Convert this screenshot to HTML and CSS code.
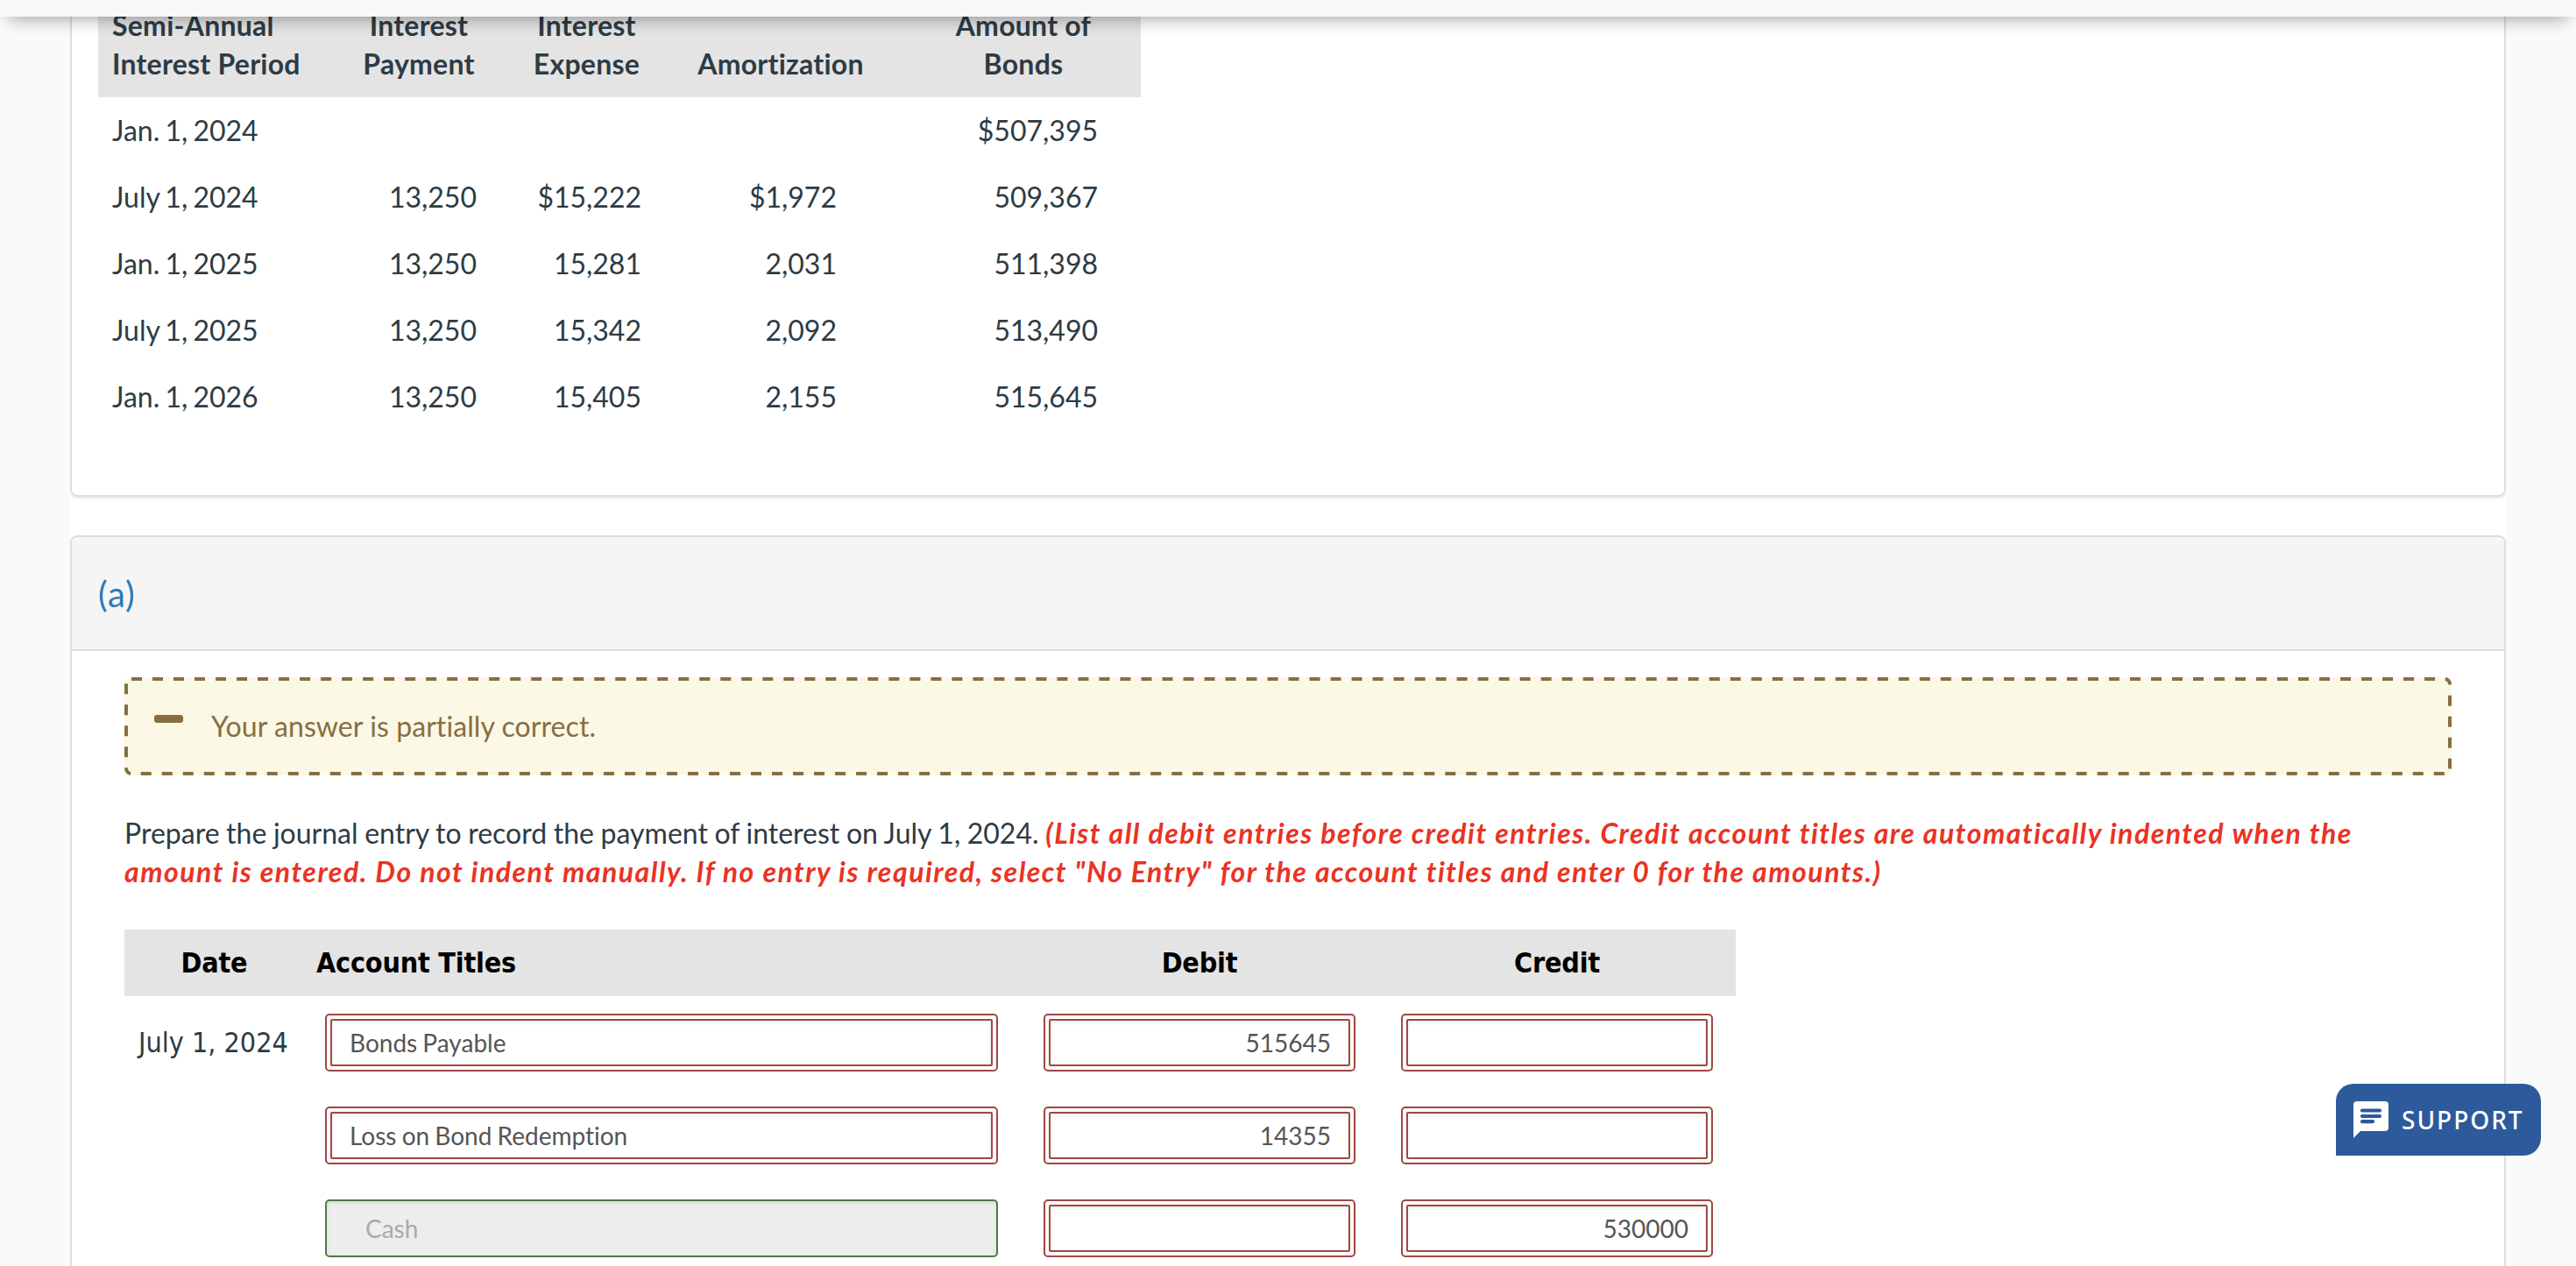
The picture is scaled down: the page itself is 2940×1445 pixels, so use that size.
FILE: index.html
```html
<!DOCTYPE html>
<html lang="en">
<head>
  <meta charset="UTF-8">
  <meta name="viewport" content="width=device-width, initial-scale=1.0">
  <title>Assignment Question</title>
  <link rel="stylesheet" href="styles.css">
</head>
<body>
  <div class="top-bar"></div>
  <div class="page">
    <div class="card">
      <table class="schedule">
        <colgroup>
          <col class="col-period"><col class="col-payment"><col class="col-expense"><col class="col-amort"><col class="col-bonds">
        </colgroup>
        <thead>
          <tr>
            <th class="period">Semi-Annual<br>Interest Period</th>
            <th>Interest<br>Payment</th>
            <th>Interest<br>Expense</th>
            <th>Amortization</th>
            <th>Amount of<br>Bonds</th>
          </tr>
        </thead>
        <tbody>
          <tr><td>Jan. 1, 2024</td><td></td><td></td><td></td><td class="bonds">$507,395</td></tr>
          <tr><td>July 1, 2024</td><td class="payment">13,250</td><td class="expense">$15,222</td><td class="amort">$1,972</td><td class="bonds">509,367</td></tr>
          <tr><td>Jan. 1, 2025</td><td class="payment">13,250</td><td class="expense">15,281</td><td class="amort">2,031</td><td class="bonds">511,398</td></tr>
          <tr><td>July 1, 2025</td><td class="payment">13,250</td><td class="expense">15,342</td><td class="amort">2,092</td><td class="bonds">513,490</td></tr>
          <tr><td>Jan. 1, 2026</td><td class="payment">13,250</td><td class="expense">15,405</td><td class="amort">2,155</td><td class="bonds">515,645</td></tr>
        </tbody>
      </table>
    </div>

    <div class="part">
      <div class="part-header">(a)</div>
      <div class="part-body">
        <div class="alert">
          <svg class="alert-border"><rect width="100%" height="100%" rx="8"/></svg>
          <span class="alert-icon"></span>
          <span>Your answer is partially correct.</span>
        </div>
        <p class="question">Prepare the journal entry to record the payment of interest on July 1, 2024. <em class="hint">(List all debit entries before credit entries. Credit account titles are automatically indented when the amount is entered. Do not indent manually. If no entry is required, select "No Entry" for the account titles and enter 0 for the amounts.)</em></p>

        <div class="journal">
          <div class="journal-row journal-head">
            <div class="head-date">Date</div>
            <div class="head-title">Account Titles</div>
            <div class="head-amount">Debit</div>
            <div class="head-amount">Credit</div>
          </div>
          <div class="journal-row">
            <div class="date">July 1, 2024</div>
            <div class="title"><div class="field wrong"><div class="field-inner">Bonds Payable</div></div></div>
            <div class="amount"><div class="field wrong"><div class="field-inner">515645</div></div></div>
            <div class="amount"><div class="field wrong"><div class="field-inner"></div></div></div>
          </div>
          <div class="journal-row">
            <div class="date"></div>
            <div class="title"><div class="field wrong"><div class="field-inner">Loss on Bond Redemption</div></div></div>
            <div class="amount"><div class="field wrong"><div class="field-inner">14355</div></div></div>
            <div class="amount"><div class="field wrong"><div class="field-inner"></div></div></div>
          </div>
          <div class="journal-row">
            <div class="date"></div>
            <div class="title"><div class="field correct">Cash</div></div>
            <div class="amount"><div class="field wrong"><div class="field-inner"></div></div></div>
            <div class="amount"><div class="field wrong"><div class="field-inner">530000</div></div></div>
          </div>
        </div>
      </div>
    </div>
  </div>

  <div class="support">
    <svg width="40" height="42" viewBox="0 0 40 42">
      <path d="M4 0h32a4 4 0 0 1 4 4v26a4 4 0 0 1-4 4H8l-8 8V4a4 4 0 0 1 4-4z" fill="#fff"/>
      <path d="M10 10.5h20M10 17h20M10 23.2h12" stroke="#2d5a9b" stroke-width="4.2" stroke-linecap="round"/>
    </svg>
    <span>SUPPORT</span>
  </div>
</body>
</html>
```

FILE: styles.css
```css
* {
  box-sizing: border-box;
}
body {
  margin: 0;
  height: 100vh;
  overflow: hidden;
  background: #fafafa;
  color: #2d3b45;
  font-family: Lato, "Liberation Sans", sans-serif;
  font-size: 32px;
  line-height: 44px;
  font-variant-ligatures: none;
}
.top-bar {
  position: fixed;
  top: -61px;
  left: 0;
  right: 0;
  height: 80px;
  background: #f8f8f8;
  box-shadow: 0 12px 20px -10px rgba(0,0,0,0.38);
  z-index: 2;
}
.page {
  margin: 0 80px;
  height: 100vh;
  overflow: hidden;
  background: #fff;
}
.card {
  height: 567px;
  padding: 0 30px;
  border: 2px solid #dddddd;
  border-top: none;
  border-radius: 0 0 8px 8px;
  box-shadow: 0 2px 3px rgba(0,0,0,0.08);
  display: flow-root;
}
.schedule {
  width: 1190px;
  margin-top: -9px;
  table-layout: fixed;
  border-collapse: collapse;
}
.col-period { width: 253px; }
.col-payment { width: 226px; }
.col-expense { width: 157px; }
.col-amort { width: 286px; }
.col-bonds { width: 268px; }
.schedule th {
  height: 120px;
  padding: 16px 0;
  background: #e4e4e4;
  letter-spacing: 0.25px;
  vertical-align: bottom;
}
.schedule td {
  height: 76px;
  padding: 16px 0 16px 16px;
  text-align: right;
}
.schedule td:first-child, .schedule th.period {
  padding-left: 16px;
  text-align: left;
}
.schedule td:first-child {
  word-spacing: -2px;
}
.schedule .payment { padding-right: 47px; }
.schedule .expense { padding-right: 16px; }
.schedule .amort { padding-right: 79px; }
.schedule .bonds { padding-right: 49px; }
.part {
  margin-top: 44px;
  height: 900px;
  border: 2px solid #dddddd;
  border-radius: 8px 8px 0 0;
}
.part-header {
  height: 130px;
  padding: 43px 30px;
  background: #f5f5f5;
  border-bottom: 2px solid #dddddd;
  border-radius: 6px 6px 0 0;
  color: #2b7abb;
  font-size: 40px;
  letter-spacing: 1px;
}
.part-body {
  padding: 30px 60px;
}
.alert {
  position: relative;
  display: flex;
  align-items: center;
  height: 112px;
  padding-left: 34px;
  overflow: hidden;
  background: #fbf8e5;
  border-radius: 8px;
  color: #876e41;
  letter-spacing: 0.08px;
}
.alert-border {
  position: absolute;
  top: 0;
  left: 0;
  width: 100%;
  height: 100%;
}
.alert-border rect {
  fill: none;
  stroke: #876e41;
  stroke-width: 8;
  stroke-dasharray: 12 12.01;
}
.alert-icon {
  width: 33px;
  height: 9px;
  margin: 0 32px 17px 0;
  background: #876e41;
  border-radius: 3px;
}
.question {
  margin: 44px 0;
  word-spacing: -0.6px;
}
.hint {
  color: #ea3323;
  font-weight: bold;
  letter-spacing: 1.5px;
  word-spacing: 0;
}
.journal {
  width: 1839px;
}
.journal-row {
  display: grid;
  grid-template-columns: 205px 818px 408px 408px;
  align-items: center;
  height: 106px;
}
.journal-head {
  height: 76px;
  background: #e4e4e4;
  color: #000;
  font-weight: bold;
  letter-spacing: -0.2px;
}
.journal-head, .date {
  font-family: "DejaVu Sans Condensed", "DejaVu Sans", sans-serif;
  font-stretch: condensed;
}
.date {
  padding-left: 16px;
}
.head-date, .head-amount {
  text-align: center;
}
.head-title {
  padding-left: 14px;
}
.title {
  padding: 0 26px 0 24px;
}
.amount {
  padding: 0 26px;
}
.amount .field {
  text-align: right;
}
.field {
  height: 66px;
  border-radius: 5px;
  color: #555;
  font-size: 28px;
  word-spacing: -1px;
}
.wrong {
  padding: 4px;
  border: 2px solid #9f4744;
}
.field-inner {
  height: 54px;
  padding: 3px 20px;
  border: 2px solid #9f4744;
  border-radius: 2px;
  box-shadow: inset 0 2px 4px rgba(0,0,0,0.08);
}
.correct {
  padding: 9px 44px;
  border: 2px solid #4c7b45;
  background: #ededed;
  box-shadow: inset 0 2px 4px rgba(0,0,0,0.08);
  color: #aaa;
}
.support {
  position: fixed;
  top: 1237px;
  right: 40px;
  width: 234px;
  height: 82px;
  padding-left: 20px;
  display: flex;
  align-items: center;
  gap: 15px;
  background: #2d5a9b;
  border-radius: 20px 20px 20px 0;
  color: #fff;
  font-family: "Noto Sans", "Open Sans", sans-serif;
  font-size: 28px;
  font-weight: 500;
  letter-spacing: 2px;
  z-index: 2;
}
```
